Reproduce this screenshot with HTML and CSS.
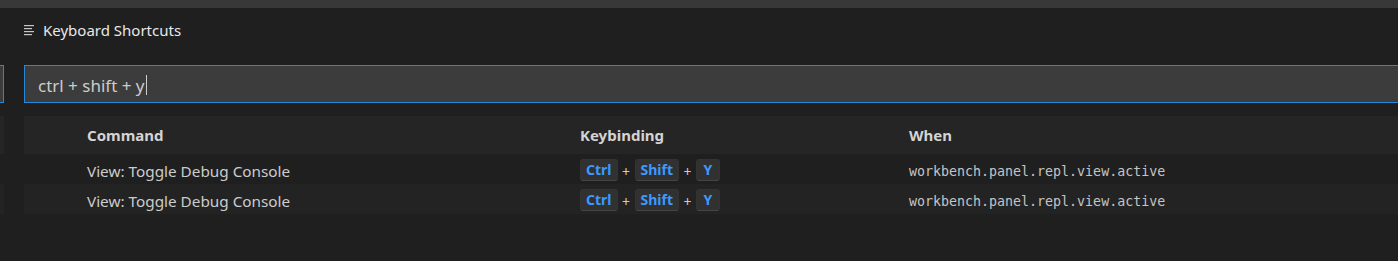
FILE: index.html
```html
<!DOCTYPE html>
<html>

<head>
    <title>Keyboard Shortcuts</title>
    <meta name="viewport" content="width=device-width, initial-scale=1">

    <link rel="stylesheet" href="styles.css">

</head>

<body>
    <div class="topBar"></div>
    <div class="titleBar">
        <svg class="titleIcon" width="12" height="12" viewBox="0 0 12 12">
            <rect x="1" y="1" width="10" height="1.2" fill="#c5c5c5" />
            <rect x="1" y="4" width="8" height="1.2" fill="#c5c5c5" />
            <rect x="1" y="7" width="10" height="1.2" fill="#c5c5c5" />
            <rect x="1" y="10" width="8" height="1.2" fill="#c5c5c5" />
        </svg>
        <span class="titleText">Keyboard Shortcuts</span>
    </div>
    <div class="editorArea">
        <div class="ghost">
            <div class="ghostInput"></div>
            <div class="ghostHeader"></div>
            <div class="ghostRow"></div>
            <div class="ghostRow odd"></div>
        </div>
        <div class="mainPanel">
            <div class="searchBox">
                <span class="searchText">ctrl + shift + y</span><span class="caret"></span>
            </div>
            <div class="table">
                <div class="row header">
                    <span></span>
                    <span>Command</span>
                    <span>Keybinding</span>
                    <span>When</span>
                </div>
                <div class="row">
                    <span></span>
                    <span class="command">View: Toggle Debug Console</span>
                    <span class="keys">
                        <span class="key">Ctrl</span><span class="plus">+</span><span class="key">Shift</span><span class="plus">+</span><span class="key">Y</span>
                    </span>
                    <span class="when">workbench.panel.repl.view.active</span>
                </div>
                <div class="row odd">
                    <span></span>
                    <span class="command">View: Toggle Debug Console</span>
                    <span class="keys">
                        <span class="key">Ctrl</span><span class="plus">+</span><span class="key">Shift</span><span class="plus">+</span><span class="key">Y</span>
                    </span>
                    <span class="when">workbench.panel.repl.view.active</span>
                </div>
            </div>
        </div>
    </div>
</body>

</html>
```

FILE: styles.css
```css
* {
    box-sizing: border-box
}

body {
    font-family: "Noto Sans", "Open Sans", sans-serif;
    margin: 0;
    background: #1f1f1f;
    color: #cccccc;
    width: 1398px;
    height: 261px;
    overflow: hidden;
}

.topBar {
    height: 8px;
    background: #383838;
}

.titleBar {
    height: 44px;
    display: flex;
    align-items: center;
    padding-left: 23px;
    gap: 8px;
}

.titleIcon {
    display: block;
}

.titleText {
    font-size: 15px;
    color: #e8e8e8;
}

.editorArea {
    display: flex;
    gap: 20px;
    padding-top: 13px;
}

.ghost {
    width: 4px;
}

.ghostInput {
    height: 38px;
    background: #3c3c3c;
    border: 1px solid #2488db;
    border-left: none;
}

.ghostHeader {
    margin-top: 13px;
    height: 38px;
    background: #252525;
}

.ghostRow {
    height: 30px;
}

.ghostRow.odd {
    background: #232323;
}

.mainPanel {
    flex: 1;
}

.searchBox {
    height: 38px;
    background: #3c3c3c;
    border: 1px solid #2488db;
    border-right: none;
    display: flex;
    align-items: center;
    padding-left: 13px;
    padding-top: 2px;
}

.searchText {
    font-size: 17px;
    color: #cccccc;
}

.caret {
    width: 1px;
    height: 20px;
    background: #cccccc;
    margin-left: 1px;
}

.table {
    margin-top: 13px;
}

.row {
    display: grid;
    grid-template-columns: 63px 493px 329px 1fr;
    align-items: center;
    height: 30px;
    padding-top: 3px;
    font-size: 15.3px;
}

.row.header {
    height: 38px;
    padding-top: 0;
    background: #252525;
    font-weight: bold;
    font-size: 15px;
    color: #d4d4d4;
}

.row.odd {
    background: #232323;
}

.keys {
    display: flex;
    align-items: center;
    position: relative;
    top: -1px;
}

.key {
    font-size: 14px;
    font-weight: bold;
    color: #3b9aff;
    background: #313131;
    border: 1px solid #333333;
    border-bottom-color: #454545;
    border-radius: 3px;
    padding: 0 5px;
    min-width: 24px;
    text-align: center;
    height: 22px;
    line-height: 20px;
}

.plus {
    width: 17px;
    text-align: center;
    font-size: 14px;
    color: #cccccc;
    position: relative;
    top: 2px;
}

.when {
    font-family: "DejaVu Sans Mono", monospace;
    font-size: 13.3px;
    color: #c4c4c4;
    position: relative;
    top: 1px;
}
```
